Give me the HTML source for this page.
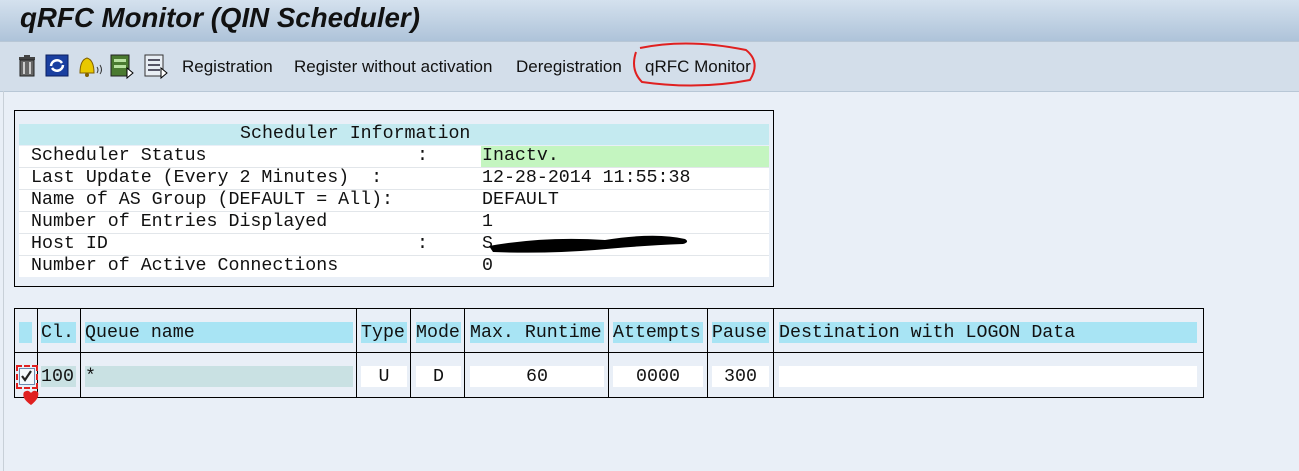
<!DOCTYPE html>
<html><head><meta charset="utf-8"><style>
body{margin:0;width:1299px;height:471px;background:#e9eff7;position:relative;overflow:hidden;font-family:"Liberation Sans",sans-serif}
.a{position:absolute}
.m{font-family:"Liberation Mono",monospace;font-size:18.3px;color:#111;white-space:pre;line-height:22px}
.hd{background:#a8e4f4}
.wc{background:#fff;text-align:center}
.vl{position:absolute;top:308px;height:89px;width:1px;background:#000}
.sep{position:absolute;left:19px;width:750px;height:1px;background:#e2e6ea}
.tb{position:absolute;top:57px;font-size:17px;color:#111;white-space:pre}
</style></head><body>
<div class="a" style="left:0;top:0;width:1299px;height:41px;background:linear-gradient(#d4e1ee,#aec3d9)"></div>
<div class="a" style="left:20px;top:2px;font-size:27.7px;font-weight:bold;font-style:italic;color:#111">qRFC Monitor (QIN Scheduler)</div>
<div class="a" style="left:0;top:41px;width:1299px;height:49px;background:#d3deea;border-top:1px solid #b8c7d6;border-bottom:1px solid #b8c7d6"></div>
<div class="a" style="left:3px;top:91px;width:1px;height:380px;background:#c8d0d8"></div>
<svg class="a" style="left:16px;top:52px" width="156" height="28">
<rect x="3" y="5" width="16" height="3" fill="#444"/><rect x="8" y="3" width="6" height="2" fill="#444"/>
<rect x="4" y="8" width="14" height="16" fill="#666" stroke="#222"/><line x1="8" y1="10" x2="8" y2="22" stroke="#ccc" stroke-width="2"/><line x1="14" y1="10" x2="14" y2="22" stroke="#ccc" stroke-width="2"/>
<rect x="30" y="3" width="22" height="21" fill="#1a3fa0" stroke="#0a1f60"/><path d="M35 14a6 6 0 0 1 11-3M47 13a6 6 0 0 1-11 3" stroke="#fff" stroke-width="2.5" fill="none"/>
<path d="M64 21 Q64 8 71 6 Q78 8 78 21Z" fill="#e8c800" stroke="#806000"/><circle cx="71" cy="23" r="2" fill="#806000"/><path d="M81 15q2 3 0 6M84 13q3 5 0 9" stroke="#333" fill="none"/>
<rect x="95" y="3" width="18" height="21" fill="#4a7a30" stroke="#222"/><rect x="98" y="7" width="12" height="3" fill="#b8e0a0"/><rect x="98" y="13" width="12" height="3" fill="#b8e0a0"/><path d="M111 16l6 5-6 5z" fill="#fff" stroke="#000"/>
<rect x="129" y="3" width="18" height="21" fill="#e8eef4" stroke="#333"/><rect x="132" y="7" width="12" height="2" fill="#556"/><rect x="132" y="12" width="12" height="2" fill="#556"/><rect x="132" y="17" width="12" height="2" fill="#556"/><path d="M145 16l6 5-6 5z" fill="#fff" stroke="#000"/>
</svg>
<div class="tb" style="left:182px">Registration</div>
<div class="tb" style="left:294px">Register without activation</div>
<div class="tb" style="left:516px">Deregistration</div>
<div class="tb" style="left:645px">qRFC Monitor</div>
<svg class="a" style="left:628px;top:40px" width="136" height="50"><path d="M12 8 Q60 -2 118 10 Q133 22 122 40 Q70 50 14 42 Q2 30 8 12" fill="none" stroke="#e02020" stroke-width="2"/></svg>
<div class="a" style="left:14px;top:110px;width:758px;height:175px;border:1px solid #000;background:#e9eff7"></div>
<div class="a" style="left:19px;top:124px;width:750px;height:21px;background:#c4eaf0"></div>
<div class="a m" style="left:240px;top:123px">Scheduler Information</div>
<div class="a" style="left:19px;top:146px;width:750px;height:131px;background:#fff"></div>
<div class="a" style="left:481px;top:146px;width:288px;height:21px;background:#c4f5c0"></div>
<div class="sep" style="top:167px"></div><div class="sep" style="top:189px"></div><div class="sep" style="top:211px"></div><div class="sep" style="top:233px"></div><div class="sep" style="top:255px"></div>
<div class="a m" style="left:31px;top:145px">Scheduler Status
Last Update (Every 2 Minutes)  :
Name of AS Group (DEFAULT = All):
Number of Entries Displayed
Host ID
Number of Active Connections</div>
<div class="a m" style="left:417px;top:145px">:



:</div>
<div class="a m" style="left:482px;top:145px">Inactv.
12-28-2014 11:55:38
DEFAULT
1
S
0</div>
<svg class="a" style="left:485px;top:232px" width="210" height="24"><path d="M4 14 Q60 4 120 8 Q170 0 200 7 Q205 10 198 12 Q150 14 110 18 Q60 22 8 20Z" fill="#000"/></svg>
<div class="a" style="left:14px;top:308px;width:1188px;height:88px;border:1px solid #000"></div>
<div class="a" style="left:14px;top:352px;width:1189px;height:1px;background:#000"></div>
<div class="vl" style="left:37px"></div><div class="vl" style="left:80px"></div><div class="vl" style="left:356px"></div><div class="vl" style="left:410px"></div><div class="vl" style="left:464px"></div><div class="vl" style="left:608px"></div><div class="vl" style="left:707px"></div><div class="vl" style="left:773px"></div>
<div class="a hd" style="left:19px;top:322px;width:13px;height:21px"></div>
<div class="a hd m" style="left:41px;top:322px;width:35px;height:21px">Cl.</div>
<div class="a hd m" style="left:85px;top:322px;width:268px;height:21px">Queue name</div>
<div class="a hd m" style="left:361px;top:322px;width:46px;height:21px;overflow:hidden">Type</div>
<div class="a hd m" style="left:416px;top:322px;width:45px;height:21px;overflow:hidden">Mode</div>
<div class="a hd m" style="left:470px;top:322px;width:134px;height:21px">Max. Runtime</div>
<div class="a hd m" style="left:613px;top:322px;width:90px;height:21px;overflow:hidden">Attempts</div>
<div class="a hd m" style="left:712px;top:322px;width:57px;height:21px;overflow:hidden">Pause</div>
<div class="a hd m" style="left:779px;top:322px;width:418px;height:21px">Destination with LOGON Data</div>
<div class="a m" style="left:41px;top:366px;width:35px;height:21px;background:#c9e1e3;overflow:hidden">100</div>
<div class="a m" style="left:85px;top:366px;width:268px;height:21px;background:#c9e1e3">*</div>
<div class="a m wc" style="left:361px;top:366px;width:46px;height:21px">U</div>
<div class="a m wc" style="left:416px;top:366px;width:45px;height:21px">D</div>
<div class="a m wc" style="left:470px;top:366px;width:134px;height:21px">60</div>
<div class="a m wc" style="left:613px;top:366px;width:90px;height:21px">0000</div>
<div class="a m wc" style="left:712px;top:366px;width:57px;height:21px">300</div>
<div class="a" style="left:779px;top:366px;width:418px;height:21px;background:#fff"></div>
<div class="a" style="left:16px;top:365px;width:18px;height:20px;border:2px dashed #e02020"></div>
<div class="a" style="left:19px;top:368px;width:14px;height:15px;background:#f4f8fc;border:1px solid #6a8ab0"></div>
<svg class="a" style="left:19px;top:368px" width="16" height="16"><path d="M3 8l3 4 6-9" stroke="#222" stroke-width="2.2" fill="none"/></svg>
<svg class="a" style="left:21px;top:388px" width="20" height="18"><path d="M10 17 Q0 10 3 4 Q7 1 10 5 Q13 1 17 4 Q19 10 10 17Z" fill="#e02020"/></svg>
</body></html>
